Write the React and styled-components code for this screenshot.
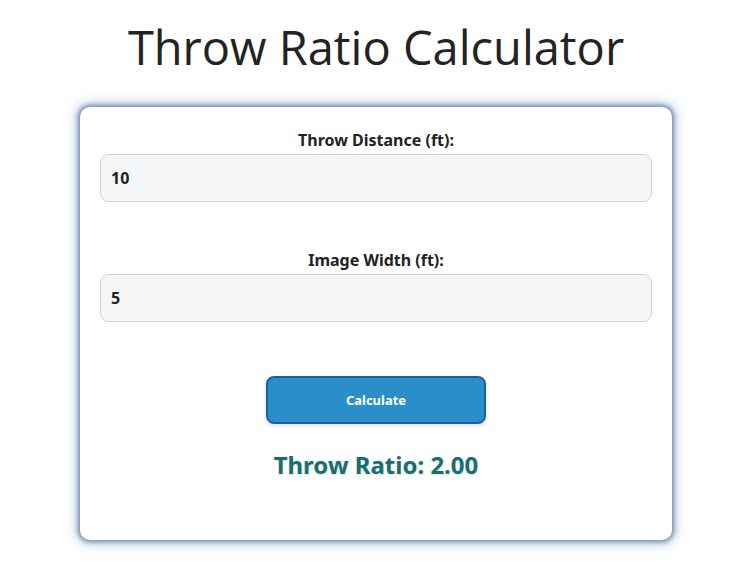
import React, { useState } from "react";
import styled, { createGlobalStyle } from "styled-components";

const Global = createGlobalStyle`
  html, body {
    margin: 0;
    padding: 0;
    background: #ffffff;
    font-family: "Noto Sans", "Open Sans", sans-serif;
    color: #222222;
  }
`;

const Page = styled.main`
  display: flex;
  flex-direction: column;
  align-items: center;
  padding: 14px 0 45px;
`;

const Title = styled.h1`
  margin: 0 0 27px;
  font-family: "Open Sans", "Noto Sans", sans-serif;
  font-weight: 400;
  font-size: 47px;
  line-height: 66px;
  color: #232323;
`;

const Card = styled.section`
  box-sizing: border-box;
  width: 592px;
  padding: 22px 20px 55px;
  background: #ffffff;
  border-radius: 10px;
  box-shadow: 0 0 4px 2px rgba(100, 130, 165, 0.85), 0 0 12px 4px rgba(130, 160, 195, 0.5);
  display: flex;
  flex-direction: column;
  align-items: center;
`;

const Field = styled.div`
  width: 100%;
  display: flex;
  flex-direction: column;
  align-items: center;
  gap: 3px;
  margin-bottom: ${(p) => p.$gap}px;
`;

const Label = styled.label`
  font-size: 16px;
  font-weight: 700;
  line-height: 22px;
  color: #222222;
`;

const Input = styled.input`
  box-sizing: border-box;
  width: 100%;
  height: 48px;
  padding: 0 10px;
  border: 1px solid #d3d5d8;
  border-radius: 9px;
  background: #f5f6f8;
  font-family: inherit;
  font-size: 16px;
  font-weight: 700;
  color: #1f1f1f;
  outline: none;
`;

const Button = styled.button`
  width: 220px;
  height: 48px;
  border: 2px solid #1d5fa6;
  border-radius: 8px;
  background: #2a8ecb;
  color: #ffffff;
  font-family: inherit;
  font-size: 13px;
  font-weight: 700;
  box-shadow: 0 2px 4px rgba(0, 0, 0, 0.12);
  cursor: pointer;
`;

const Result = styled.p`
  margin: 21px 0 0;
  font-size: 24px;
  font-weight: 700;
  line-height: 40px;
  color: #17706d;
  text-shadow: 0 1px 2px rgba(0, 0, 0, 0.15);
`;

export default function App() {
  const [distance, setDistance] = useState("10");
  const [width, setWidth] = useState("5");
  const [ratio, setRatio] = useState((10 / 5).toFixed(2));

  const calculate = () => {
    const d = parseFloat(distance);
    const w = parseFloat(width);
    if (d > 0 && w > 0) setRatio((d / w).toFixed(2));
  };

  return (
    <>
      <Global />
      <Page>
        <Title>Throw Ratio Calculator</Title>
        <Card>
          <Field $gap={47}>
            <Label htmlFor="distance">Throw Distance (ft):</Label>
            <Input id="distance" value={distance} onChange={(e) => setDistance(e.target.value)} />
          </Field>
          <Field $gap={54}>
            <Label htmlFor="width">Image Width (ft):</Label>
            <Input id="width" value={width} onChange={(e) => setWidth(e.target.value)} />
          </Field>
          <Button onClick={calculate}>Calculate</Button>
          <Result>Throw Ratio: {ratio}</Result>
        </Card>
      </Page>
    </>
  );
}
